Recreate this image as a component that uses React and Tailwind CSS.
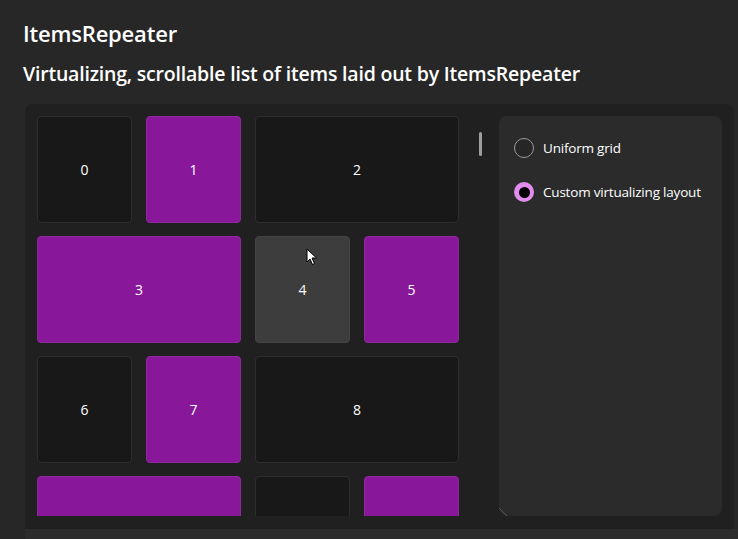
import React from 'react';

const items = [
  { n: 0, span: 1, kind: 'dark' },
  { n: 1, span: 1, kind: 'purple' },
  { n: 2, span: 2, kind: 'dark' },
  { n: 3, span: 2, kind: 'purple' },
  { n: 4, span: 1, kind: 'hover' },
  { n: 5, span: 1, kind: 'purple' },
  { n: 6, span: 1, kind: 'dark' },
  { n: 7, span: 1, kind: 'purple' },
  { n: 8, span: 2, kind: 'dark' },
  // last row is scrolled out of view, labels hidden under the clip
  { n: 9, span: 2, kind: 'purple', hidden: true },
  { n: 10, span: 1, kind: 'dark', hidden: true },
  { n: 11, span: 1, kind: 'purple', hidden: true },
];

const kindClass = {
  dark: 'bg-[#181818] border border-[#2e2e2e]',
  purple: 'bg-[#881899] border border-[#8f2a9e]',
  hover: 'bg-[#3d3d3d] border border-[#444444]',
};

const Tile = ({ item }) => (
  <div
    className={`${item.span === 2 ? 'col-span-2' : ''} ${kindClass[item.kind]} h-[107px] rounded-[4px] flex items-center justify-center text-[14px] text-white relative`}
  >
    {!item.hidden && item.n}
    {item.kind === 'hover' && (
      <svg className="absolute left-[50px] top-[11px]" width="12" height="18" viewBox="0 0 12 18">
        <path d="M1 1 L1 14 L4 11 L6.5 16.5 L8.5 15.5 L6 10 L10.5 10 Z" fill="#ffffff" stroke="#000000" strokeWidth="1" />
      </svg>
    )}
  </div>
);

const Radio = ({ checked, label }) => (
  <div className="flex items-center gap-[9px] h-[20px]">
    {checked ? (
      <span className="shrink-0 w-[20px] h-[20px] rounded-full bg-[#e28ded] flex items-center justify-center">
        <span className="w-[11px] h-[11px] rounded-full bg-black" />
      </span>
    ) : (
      <span className="shrink-0 w-[20px] h-[20px] rounded-full border border-[#9b9b9b] bg-[#262626]" />
    )}
    <span className="text-[13.5px] text-white whitespace-nowrap tracking-[-0.2px]">{label}</span>
  </div>
);

export default function App() {
  return (
    <div className="w-[738px] h-[539px] overflow-hidden bg-[#272727] text-white font-['Open_Sans','Noto_Sans',sans-serif] flex flex-col">
      <div className="pl-[23px] pt-[17px]">
        <h1 className="text-[22px] font-semibold leading-[32px] tracking-[-0.2px]">ItemsRepeater</h1>
        <h2 className="text-[19.5px] font-semibold leading-[26px] mt-[12px] tracking-[-0.2px] whitespace-nowrap">
          Virtualizing, scrollable list of items laid out by ItemsRepeater
        </h2>
      </div>

      <div className="ml-[25px] mr-[4px] mt-[17px] h-[425px] shrink-0 bg-[#202020] rounded-t-[8px] flex pt-[12px] pl-[12px]">
        <div className="w-[422px] h-[400px] overflow-hidden">
          <div className="grid grid-cols-4 gap-x-[14px] gap-y-[13px]">
            {items.map((it) => (
              <Tile key={it.n} item={it} />
            ))}
          </div>
        </div>

        <div className="w-[40px] flex justify-center pt-[16px] pl-[2px]">
          <div className="w-[3px] h-[24px] rounded-full bg-[#9e9e9e]" />
        </div>

        <div className="w-[223px] h-[400px] bg-[#2b2b2b] rounded-[8px] relative px-[15px] pt-[22px] flex flex-col gap-[24px]">
          <Radio label="Uniform grid" />
          <Radio checked label="Custom virtualizing layout" />
          <svg className="absolute left-0 bottom-0" width="9" height="9" viewBox="0 0 9 9">
            <path d="M0 1 L8 9" stroke="#555555" strokeWidth="1" />
          </svg>
        </div>
      </div>

      <div className="ml-[25px] h-[10px] shrink-0 bg-[#2c2c2c]" />
    </div>
  );
}
